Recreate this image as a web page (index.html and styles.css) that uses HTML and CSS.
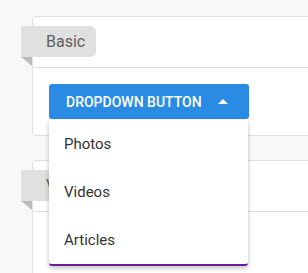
FILE: index.html
```html
<!DOCTYPE html>
<html lang="en">
<head>
  <meta charset="UTF-8">
  <title>Dropdowns</title>
  <link rel="stylesheet" href="styles.css">
</head>
<body>
  <div class="page">
    <!-- Basic -->
    <div class="card">
      <div class="card-head">
        <span class="ribbon">Basic</span>
      </div>
      <div class="card-body">
        <div class="dropdown">
          <button class="dd-btn">Dropdown button <span class="caret"></span></button>
          <ul class="dd-menu">
            <li>Photos</li>
            <li>Videos</li>
            <li>Articles</li>
          </ul>
        </div>
      </div>
    </div>

    <!-- Variations -->
    <div class="card">
      <div class="card-head">
        <span class="ribbon">Variations</span>
      </div>
      <div class="card-body tall"></div>
    </div>
  </div>
</body>
</html>
```

FILE: styles.css
```css
* { box-sizing: border-box; }

body {
  margin: 0;
  background: #f8f8f8;
  font-family: Roboto, 'Noto Sans', sans-serif;
  overflow: hidden;
}

.page {
  padding: 16px 0 0 32px;
  width: 500px;
  display: flex;
  flex-direction: column;
  gap: 24px;
}

.card {
  background: #fff;
  border: 1px solid #e0e0e0;
  border-radius: 4px;
}

.card-head {
  padding: 9px 0 10px;
  border-bottom: 1px solid #e0e0e0;
}

.ribbon {
  position: relative;
  display: inline-block;
  margin-left: -12px;
  height: 31px;
  line-height: 31px;
  padding: 0 11px 0 25px;
  background: #e0e0e0;
  color: #5f5f5f;
  font-size: 16px;
  border-radius: 0 6px 6px 0;
}

.ribbon::before {
  content: '';
  position: absolute;
  left: 0;
  top: 100%;
  border-top: 9px solid #bdbdbd;
  border-left: 11px solid transparent;
}

.card-body {
  padding: 16px;
}

.card-body.tall {
  height: 120px;
}

.dropdown {
  position: relative;
  width: 200px;
}

.dd-btn {
  display: flex;
  align-items: center;
  gap: 16px;
  width: 200px;
  height: 35px;
  padding: 0 17px;
  background: #2a8be4;
  color: #fff;
  border: none;
  border-radius: 3px;
  font-family: Roboto, sans-serif;
  font-weight: 500;
  font-size: 14px;
  text-transform: uppercase;
}

.caret {
  border-left: 5px solid transparent;
  border-right: 5px solid transparent;
  border-bottom: 5px solid #fff;
}

.dd-menu {
  position: absolute;
  top: 36px;
  left: 0;
  width: 199px;
  margin: 0;
  padding: 0;
  list-style: none;
  background: #fff;
  border-bottom: 2px solid #6a1b9a;
  border-radius: 0 0 3px 3px;
  box-shadow: 0 2px 5px rgba(0,0,0,0.25);
  z-index: 2;
}

.dd-menu li {
  height: 48px;
  line-height: 48px;
  padding-left: 15px;
  font-size: 15px;
  color: #333;
}
```
